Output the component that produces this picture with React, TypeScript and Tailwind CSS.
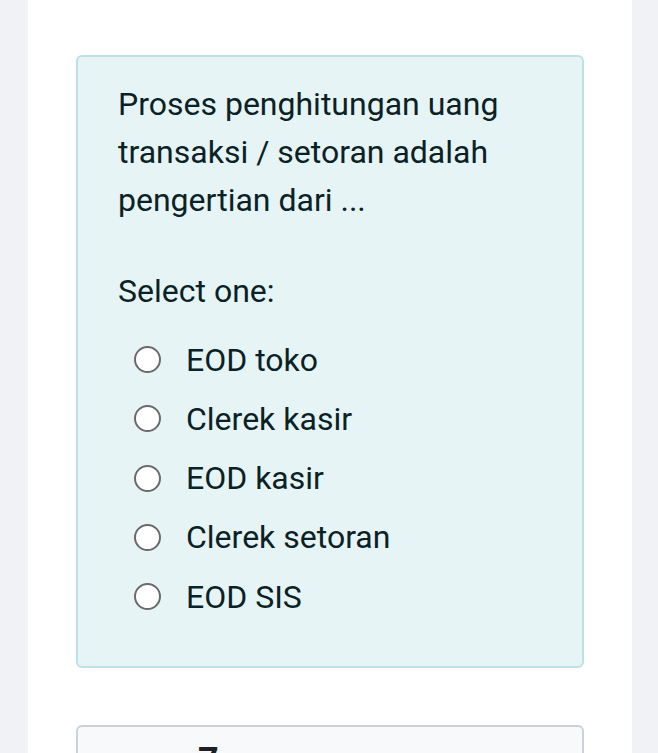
export default function App() {
  const options = ["EOD toko", "Clerek kasir", "EOD kasir", "Clerek setoran", "EOD SIS"];
  return (
    <div className="flex h-[753px] overflow-hidden bg-[#f0f2f5] pl-[28px] pr-[26px] font-['Roboto',sans-serif]">
      <div className="flex-1 bg-white px-[48px] pt-[55px]">
        <div className="rounded-[6px] border-2 border-[#bce2e8] bg-[#e7f4f6] pb-[40px] pl-[40px] pr-[30px] pt-[23px] text-[32px] leading-[48px] text-[#0a2226]">
          <p>
            Proses penghitungan uang transaksi / setoran adalah pengertian dari ...
          </p>
          <p className="mt-[43px]">Select one:</p>
          <div className="mt-[15px] flex flex-col">
            {options.map((o) => (
              <label key={o} className="flex h-[59.25px] items-center pl-[16px]">
                <span className="h-[27px] w-[27px] shrink-0 rounded-full border-[2.5px] border-[#6a6a6a] bg-white" />
                <span className="ml-[25px]">{o}</span>
              </label>
            ))}
          </div>
        </div>
        <div className="mt-[57px] h-[80px] rounded-[6px] border-2 border-[#ccd0d8] bg-[#f8f9fa] pl-[120px] pt-[10px] text-[36px] font-bold leading-[48px] text-[#1d2125]">
          7
        </div>
      </div>
    </div>
  );
}
